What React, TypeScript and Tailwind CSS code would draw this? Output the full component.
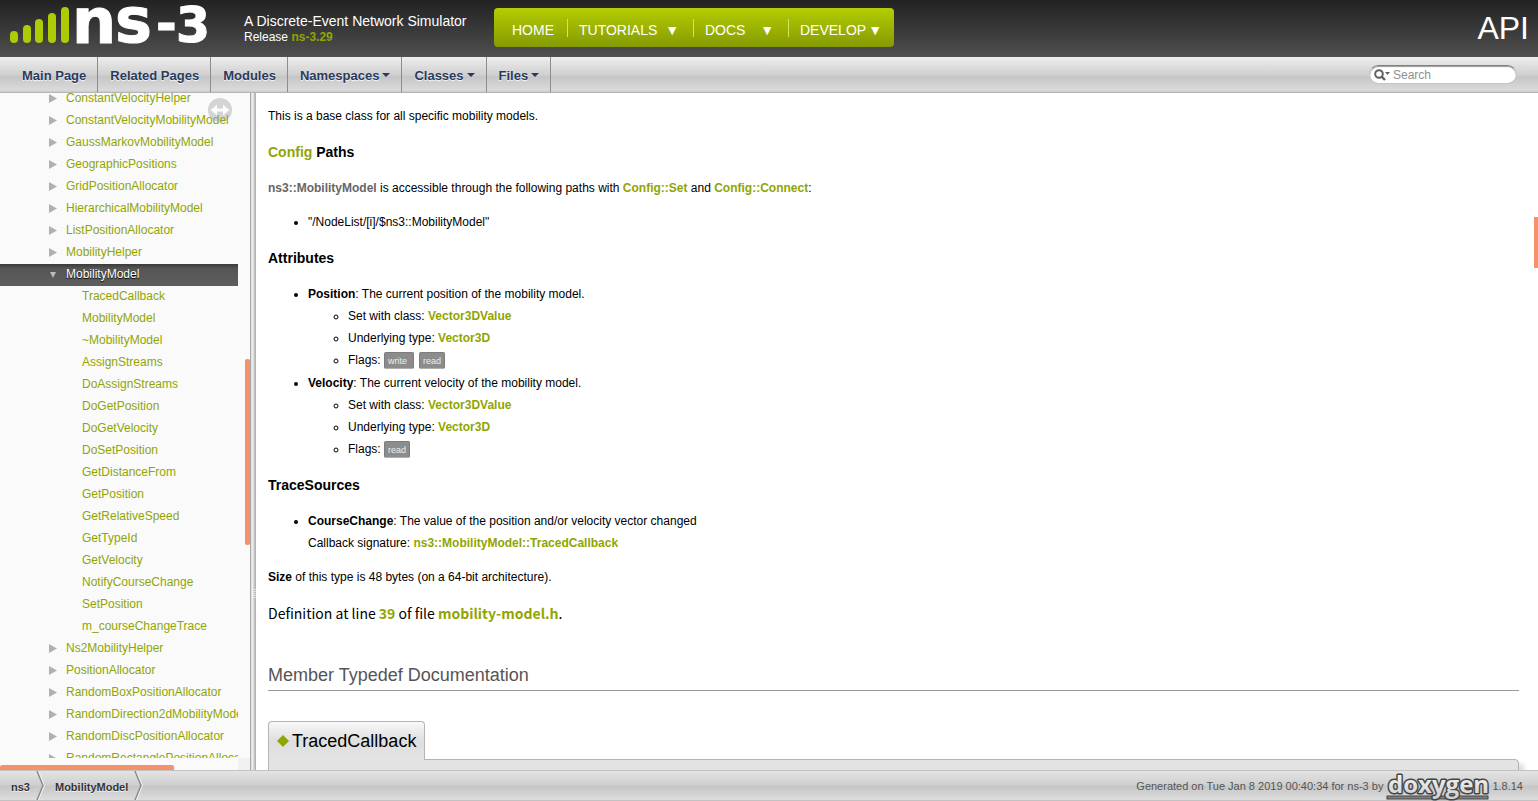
import React from 'react';

interface TreeNode {
  label: string;
  level: 1 | 2;
  selected?: boolean;
}

interface Attribute {
  name: string;
  description: string;
  setWith: string;
  underlying: string;
  flags: string[];
}

const treeNodes: TreeNode[] = [
  { label: 'ConstantVelocityHelper', level: 1 },
  { label: 'ConstantVelocityMobilityModel', level: 1 },
  { label: 'GaussMarkovMobilityModel', level: 1 },
  { label: 'GeographicPositions', level: 1 },
  { label: 'GridPositionAllocator', level: 1 },
  { label: 'HierarchicalMobilityModel', level: 1 },
  { label: 'ListPositionAllocator', level: 1 },
  { label: 'MobilityHelper', level: 1 },
  { label: 'MobilityModel', level: 1, selected: true },
  { label: 'TracedCallback', level: 2 },
  { label: 'MobilityModel', level: 2 },
  { label: '~MobilityModel', level: 2 },
  { label: 'AssignStreams', level: 2 },
  { label: 'DoAssignStreams', level: 2 },
  { label: 'DoGetPosition', level: 2 },
  { label: 'DoGetVelocity', level: 2 },
  { label: 'DoSetPosition', level: 2 },
  { label: 'GetDistanceFrom', level: 2 },
  { label: 'GetPosition', level: 2 },
  { label: 'GetRelativeSpeed', level: 2 },
  { label: 'GetTypeId', level: 2 },
  { label: 'GetVelocity', level: 2 },
  { label: 'NotifyCourseChange', level: 2 },
  { label: 'SetPosition', level: 2 },
  { label: 'm_courseChangeTrace', level: 2 },
  { label: 'Ns2MobilityHelper', level: 1 },
  { label: 'PositionAllocator', level: 1 },
  { label: 'RandomBoxPositionAllocator', level: 1 },
  { label: 'RandomDirection2dMobilityModel', level: 1 },
  { label: 'RandomDiscPositionAllocator', level: 1 },
  { label: 'RandomRectanglePositionAllocator', level: 1 },
];

const attributes: Attribute[] = [
  {
    name: 'Position',
    description: 'The current position of the mobility model.',
    setWith: 'Vector3DValue',
    underlying: 'Vector3D',
    flags: ['write', 'read'],
  },
  {
    name: 'Velocity',
    description: 'The current velocity of the mobility model.',
    setWith: 'Vector3DValue',
    underlying: 'Vector3D',
    flags: ['read'],
  },
];

const tabs = [
  { label: 'Main Page' },
  { label: 'Related Pages' },
  { label: 'Modules' },
  { label: 'Namespaces', menu: true },
  { label: 'Classes', menu: true },
  { label: 'Files', menu: true },
];

const DocLink: React.FC<{ children: React.ReactNode }> = ({ children }) => (
  <a href="#" className="font-bold text-[#91a501]">
    {children}
  </a>
);

const Logo = () => (
  <a href="#" aria-label="ns-3" className="flex w-[234px] shrink-0 items-start pt-[7px] pl-[10px] text-white">
    <svg width="60" height="36" viewBox="0 0 60 36" aria-hidden="true">
      <g fill="#aecb06">
        <rect x="0" y="24" width="8" height="12" rx="4" />
        <rect x="13" y="18" width="8" height="18" rx="4" />
        <rect x="25" y="12" width="8" height="24" rx="4" />
        <rect x="38" y="6" width="8" height="30" rx="4" />
        <rect x="51" y="0" width="8" height="36" rx="4" />
      </g>
    </svg>
    <svg width="142" height="38" viewBox="0 0 142 38" className="shrink-0 overflow-visible">
      <g fill="#fff" stroke="#fff" fontFamily="'DejaVu Sans', sans-serif" fontWeight="700">
        <text x="2" y="36" fontSize="62">n</text>
        <text x="45" y="35" fontSize="62">s</text>
        <text x="86" y="34" fontSize="50">-</text>
        <text x="106" y="35" fontSize="49">3</text>
      </g>
    </svg>
  </a>
);

const MenuCaret = () => (
  <svg width="8" height="4" viewBox="0 0 8 4" className="mb-[3px] ml-[3px]" aria-hidden="true">
    <path d="M0 0h8L4 4z" fill="#283a5d" />
  </svg>
);

const Header = () => (
  <header className="flex h-[57px] shrink-0 items-start bg-linear-to-b from-[#222] to-[#505050] text-white">
    <Logo />
    <div className="w-[260px] shrink-0 pt-3 pl-[10px]">
      <div className="text-[14px] leading-[18px] whitespace-nowrap">A Discrete-Event Network Simulator</div>
      <div className="text-[12px] leading-[14px]">
        Release <span className="font-bold text-[#91a501]">ns-3.29</span>
      </div>
    </div>
    <nav className="mt-2 flex h-[39px] w-[400px] shrink-0 items-center rounded-[4px] bg-linear-to-b from-[#b4cd03] to-[#869b02] text-[14px]">
      <a href="#" className="w-[73px] pt-[5px] pl-[18px]">HOME</a>
      <a href="#" className="flex h-[18px] w-[126px] items-center justify-between border-l border-[#d3e55a] pr-[14px] pl-[11px]">
        <span className="pt-[5px]">TUTORIALS</span>
        <span className="pt-[5px]">▼</span>
      </a>
      <a href="#" className="flex h-[18px] w-[95px] items-center justify-between border-l border-[#d3e55a] pr-[14px] pl-[11px]">
        <span className="pt-[5px]">DOCS</span>
        <span className="pt-[5px]">▼</span>
      </a>
      <a href="#" className="flex h-[18px] grow items-center justify-between border-l border-[#d3e55a] pr-3 pl-[11px]">
        <span className="pt-[5px]">DEVELOP</span>
        <span className="pt-[5px]">▼</span>
      </a>
    </nav>
    <div className="ml-auto pt-2 pr-[9px] text-[32px] leading-10">API</div>
  </header>
);

const TabBar = () => (
  <div className="flex h-9 shrink-0 items-center justify-between border-b border-[#b4b4b4] bg-[linear-gradient(#eeeeee_0%,#cfcfcf_52%,#c5c5c5_56%,#dadada_94%,#cccccc_100%)] pr-[21px]">
    <nav className="flex h-full pl-[10px] text-[13px] font-bold text-[#283a5d] [text-shadow:0_1px_1px_rgba(255,255,255,0.9)]">
      {tabs.map((tab) => (
        <a
          key={tab.label}
          href="#"
          className="flex items-center border-r border-[#8d8d8d] pt-[3px] pr-[11px] pl-3"
        >
          {tab.label}
          {tab.menu && <MenuCaret />}
        </a>
      ))}
    </nav>
    <label className="flex h-[19px] w-[148px] items-center rounded-full border border-[#c4c4c4] border-t-[#808080] bg-white pl-1 shadow-[inset_0_1px_1px_#999]">
      <svg width="17" height="12" viewBox="0 0 17 12" className="shrink-0" aria-label="Search scope">
        <circle cx="5" cy="5" r="3.8" fill="none" stroke="#606060" strokeWidth="2" />
        <path d="M7.5 7.5 11 11" stroke="#606060" strokeWidth="2.4" />
        <path d="M11 3h5l-2.5 3z" fill="#606060" />
      </svg>
      <input
        type="text"
        placeholder="Search"
        className="ml-[2px] w-[110px] bg-transparent text-[12px] placeholder:text-[#909090] outline-none"
      />
    </label>
  </div>
);

const TreeRow: React.FC<{ node: TreeNode }> = ({ node }) => (
  <li
    className={`flex h-[22px] items-center pb-[2px] ${
      node.selected
        ? 'bg-linear-to-b from-[#3a3a3a] via-[#555] via-20% to-[#5e5e5e] text-white [text-shadow:0_1px_1px_#000]'
        : 'text-[#91a501]'
    } ${node.level === 1 ? 'pl-[49px]' : 'pl-[82px]'}`}
  >
    {node.level === 1 && (
      <svg width="17" height="10" viewBox="0 0 17 10" className="mt-[2px] shrink-0" aria-hidden="true">
        {node.selected ? <path d="M1 2h6L4 8z" fill="#bbb" /> : <path d="M0 0v9l8-4.500z" fill="#b0b0b0" />}
      </svg>
    )}
    <a href="#" className="whitespace-nowrap">
      {node.label}
    </a>
  </li>
);

const Sidebar = () => (
  <aside className="relative flex w-[250px] shrink-0 flex-col bg-[#fafafa] text-[12px]">
    <div className="flex min-h-0 grow">
      <ul className="-mt-[5px] min-w-0 grow overflow-hidden">
        {treeNodes.map((node, index) => (
          <TreeRow key={index} node={node} />
        ))}
      </ul>
      <div className="flex w-3 shrink-0 justify-end pt-[266px]">
        <div className="h-[186px] w-[5px] rounded-[2px] bg-[#f5916b]" />
      </div>
    </div>
    <div className="flex h-3 shrink-0 items-end justify-between">
      <div className="h-[5px] w-[174px] rounded-t-[2px] bg-[#f5916b]" />
      <div className="h-3 w-3 bg-[#f1f1f0]" />
    </div>
    {/* sync toggle floats over the tree */}
    <button type="button" aria-label="Toggle panel sync" className="absolute top-[5px] right-[18px] opacity-40">
      <svg width="24" height="24" viewBox="0 0 24 24">
        <circle cx="12" cy="12" r="12" fill="#9c9c9c" />
        <path d="M2.500 12 9 6.500v4h6v-4l6.500 5.500-6.500 5.500v-4H9v4z" fill="#fff" />
      </svg>
    </button>
  </aside>
);

const Splitter = () => (
  <div className="flex w-[6px] shrink-0 items-center border-l border-[#a8a8a8] bg-[linear-gradient(90deg,#d8d8d8,#f0f0f0_30%,#c4c4c4_70%,#aaaaaa)]">
    <svg width="5" height="9" viewBox="0 0 5 9" className="mt-[323px]" aria-hidden="true">
      <path d="M1.500 0v9M4 0v9" stroke="#fff" strokeDasharray="1 1" />
    </svg>
  </div>
);

const FlagLabel: React.FC<{ text: string }> = ({ text }) => (
  <span
    className={`mr-[5px] inline-block h-[17px] rounded-[2px] border border-[#7c7c7c] border-b-[#b0b0b0] bg-[#8c8c8c] px-[3px] align-middle text-[9px] leading-[16px] text-[#ececec] ${
      text === 'write' ? 'w-[30px]' : 'w-[26px]'
    }`}
  >
    {text}
  </span>
);

const Content = () => (
  <main className="relative min-w-0 grow overflow-hidden bg-white pt-3 pr-[19px] pl-3 text-[12px] leading-[22px] text-black">
    <p>This is a base class for all specific mobility models.</p>
    <h3 className="my-[14px] text-[14px] leading-[22px] font-bold">
      <DocLink>Config</DocLink> Paths
    </h3>
    <p className="mb-3">
      <a href="#" className="font-bold text-[#666]">ns3::MobilityModel</a> is accessible through the following paths with{' '}
      <DocLink>Config::Set</DocLink> and <DocLink>Config::Connect</DocLink>:
    </p>
    <ul className="list-disc pl-10">
      <li>"/NodeList/[i]/$ns3::MobilityModel"</li>
    </ul>

    <h3 className="my-[14px] text-[14px] leading-[22px] font-bold">Attributes</h3>
    <ul className="list-disc space-y-px pl-10">
      {attributes.map((attribute) => (
        <li key={attribute.name}>
          <b>{attribute.name}</b>: {attribute.description}
          <ul className="list-[circle] pl-10">
            <li>
              Set with class: <DocLink>{attribute.setWith}</DocLink>
            </li>
            <li>
              Underlying type: <DocLink>{attribute.underlying}</DocLink>
            </li>
            <li>
              Flags:{' '}
              {attribute.flags.map((flag) => (
                <FlagLabel key={flag} text={flag} />
              ))}
            </li>
          </ul>
        </li>
      ))}
    </ul>

    <h3 className="my-[14px] text-[14px] leading-[22px] font-bold">TraceSources</h3>
    <ul className="mb-3 list-disc pl-10">
      <li>
        <b>CourseChange</b>: The value of the position and/or velocity vector changed
        <br />
        Callback signature: <DocLink>ns3::MobilityModel::TracedCallback</DocLink>
      </li>
    </ul>
    <p>
      <b>Size</b> of this type is 48 bytes (on a 64-bit architecture).
    </p>
    <p className="mt-[14px] font-['Noto_Sans_CJK_SC',sans-serif] text-[14px] leading-[22px]">
      Definition at line <DocLink>39</DocLink> of file <DocLink>mobility-model.h</DocLink>.
    </p>

    <h2 className="mt-10 border-b border-[#999] pb-1 text-[18px] leading-[22px] text-[#555]">
      Member Typedef Documentation
    </h2>
    <section className="mt-[30px]">
      <h2 className="relative z-10 flex h-[39px] w-fit items-center rounded-t-[4px] border border-b-0 border-[#b4b4b4] bg-linear-to-b from-[#f8f8f8] via-[#dfdfdf] to-[#e3e3e3] px-2 text-[18px]">
        <a href="#" aria-label="Permalink" className="mr-[3px]">
          <svg width="12" height="12" viewBox="0 0 12 12">
            <path d="m6 0 6 6-6 6-6-6z" fill="#91a501" />
          </svg>
        </a>
        TracedCallback
      </h2>
      <div className="-mt-px h-16 rounded-tr-[4px] border border-[#b4b4b4] bg-[#e3e3e3] shadow-[5px_5px_5px_rgba(0,0,0,0.15)]" />
    </section>
    <div className="absolute top-[124px] right-0 h-[51px] w-1 bg-[#f5916b]" />
  </main>
);

const Footer = () => (
  <footer className="flex h-[31px] shrink-0 items-center justify-between border-t border-b border-[#c2c2c2] bg-[linear-gradient(#e4e4e4_0%,#cfcfcf_48%,#c5c5c5_52%,#dddddd_100%)] text-[11px]">
    <nav className="flex h-full items-center pl-[11px] font-bold text-[#333] [text-shadow:0_1px_1px_rgba(255,255,255,0.9)]">
      {['ns3', 'MobilityModel'].map((crumb) => (
        <React.Fragment key={crumb}>
          <a href="#" className="pt-1">{crumb}</a>
          <svg width="10" height="29" viewBox="0 0 10 29" className="mr-[9px] ml-[6px]" aria-hidden="true">
            <path d="M1 0 7 14.500 1 29" fill="none" stroke="#8a8a8a" strokeWidth="1.500" />
            <path d="M2.500 0 8.500 14.500 2.500 29" fill="none" stroke="#f2f2f2" />
          </svg>
        </React.Fragment>
      ))}
    </nav>
    <div className="flex items-center pr-[15px] text-[#555]">
      <span className="pt-[2px]">Generated on Tue Jan 8 2019 00:40:34 for ns-3 by</span>
      <a href="#" aria-label="doxygen" className="mr-[2px] ml-[3px]">
        <svg width="104" height="28" viewBox="0 0 104 28" className="overflow-visible">
          <defs>
            <linearGradient id="doxygenFill" x1="0" y1="0" x2="0" y2="1">
              <stop offset="0" stopColor="#fff" />
              <stop offset="1" stopColor="#ccc" />
            </linearGradient>
          </defs>
          <rect x="1" y="24" width="101" height="3" fill="#808080" stroke="#444" />
          <text
            x="2"
            y="21"
            fontFamily="'Open Sans', sans-serif"
            fontWeight="700"
            fontSize="24"
            fill="url(#doxygenFill)"
            stroke="#444"
            strokeWidth="3"
            strokeLinejoin="round"
            paintOrder="stroke"
          >
            doxygen
          </text>
        </svg>
      </a>
      <span className="pt-[2px]">1.8.14</span>
    </div>
  </footer>
);

export default function App() {
  return (
    <div className="flex h-screen flex-col overflow-hidden font-['Liberation_Sans',Arial,sans-serif]">
      <Header />
      <TabBar />
      <div className="flex min-h-0 grow overflow-hidden">
        <Sidebar />
        <Splitter />
        <Content />
      </div>
      <Footer />
    </div>
  );
}
